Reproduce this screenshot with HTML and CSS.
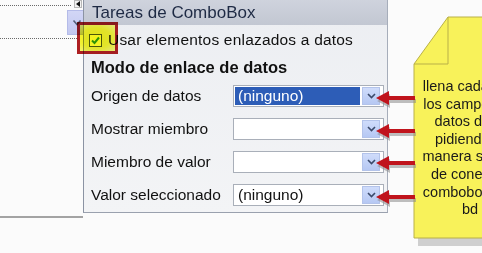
FILE: index.html
```html
<!DOCTYPE html>
<html lang="es">
<head>
<meta charset="utf-8">
<title>Tareas de ComboBox</title>
<link rel="stylesheet" href="styles.css">
</head>
<body>
<div class="stage">
  <div class="designer">
    <div class="drow top">
      <div class="dots"></div>
      <div class="tagarrow"><span class="tri"></span></div>
    </div>
    <div class="drow tagrow">
      <div class="tagbtn">
        <svg width="10" height="8" viewBox="0 0 10 8"><path d="M1.5 1.5 L5 5.5 L8.5 1.5" fill="none" stroke="#55607a" stroke-width="1.6"/></svg>
      </div>
    </div>
    <div class="dots mid"></div>
    <div class="dfill"></div>
    <div class="dline"></div>
  </div>

  <section class="panel">
    <header class="phead">Tareas de ComboBox</header>
    <div class="pbody">
      <label class="checkrow">
        <span class="checkbox">
          <svg width="11" height="11" viewBox="0 0 11 11"><path d="M2 5.5 L4.5 8 L9 2.5" fill="none" stroke="#2f9a22" stroke-width="2"/></svg>
        </span>
        <span class="checktext">Usar elementos enlazados a datos</span>
      </label>
      <h2 class="section">Modo de enlace de datos</h2>
      <div class="rows">
        <div class="row">
          <span class="label">Origen de datos</span>
          <div class="combo">
            <span class="value selected">(ninguno)</span>
            <span class="dd"><svg width="9" height="6" viewBox="0 0 9 6"><path d="M1 1 L4.5 4.5 L8 1" fill="none" stroke="#3b4a6b" stroke-width="1.6"/></svg></span>
          </div>
        </div>
        <div class="row">
          <span class="label">Mostrar miembro</span>
          <div class="combo">
            <span class="value"></span>
            <span class="dd"><svg width="9" height="6" viewBox="0 0 9 6"><path d="M1 1 L4.5 4.5 L8 1" fill="none" stroke="#3b4a6b" stroke-width="1.6"/></svg></span>
          </div>
        </div>
        <div class="row">
          <span class="label">Miembro de valor</span>
          <div class="combo">
            <span class="value"></span>
            <span class="dd"><svg width="9" height="6" viewBox="0 0 9 6"><path d="M1 1 L4.5 4.5 L8 1" fill="none" stroke="#3b4a6b" stroke-width="1.6"/></svg></span>
          </div>
        </div>
        <div class="row">
          <span class="label">Valor seleccionado</span>
          <div class="combo">
            <span class="value">(ninguno)</span>
            <span class="dd"><svg width="9" height="6" viewBox="0 0 9 6"><path d="M1 1 L4.5 4.5 L8 1" fill="none" stroke="#3b4a6b" stroke-width="1.6"/></svg></span>
          </div>
        </div>
      </div>
    </div>
  </section>

  <aside class="notearea">
    <div class="note">
      <svg class="noteshape" width="116" height="230" viewBox="0 0 116 230">
        <path d="M37 3 L115 3 L115 229 L3 229 L3 50 Z" fill="#9a9a9a" opacity="0.45" transform="translate(2,3)"/>
        <path d="M35 1 L115 1 L115 222 L1 222 L1 48 Z" fill="#f8f25a" stroke="#b9b048" stroke-width="1"/>
        <path d="M35 1 L35 48 L1 48" fill="none" stroke="#b9b048" stroke-width="1"/>
      </svg>
      <p class="notetext">llena cada uno<br>los campos de<br>datos de la<br>pidiendo la<br>manera simple<br>de conexión<br>combobox a la<br>bd</p>
    </div>
  </aside>

  <div class="highlight"></div>

  <svg class="arrows" width="60" height="130" viewBox="0 0 60 130">
    <g fill="#8c8c8c" opacity="0.55" transform="translate(1,3)">
      <path d="M6 13 L19 6 L19 11 L45 11 L45 15 L19 15 L19 20 Z"/>
      <path d="M6 46 L19 39 L19 44 L45 44 L45 48 L19 48 L19 53 Z"/>
      <path d="M6 78 L19 71 L19 76 L45 76 L45 80 L19 80 L19 85 Z"/>
      <path d="M6 112 L19 105 L19 110 L45 110 L45 114 L19 114 L19 119 Z"/>
    </g>
    <g fill="#c0141c">
      <path d="M6 13 L19 6 L19 11 L45 11 L45 15 L19 15 L19 20 Z"/>
      <path d="M6 46 L19 39 L19 44 L45 44 L45 48 L19 48 L19 53 Z"/>
      <path d="M6 78 L19 71 L19 76 L45 76 L45 80 L19 80 L19 85 Z"/>
      <path d="M6 112 L19 105 L19 110 L45 110 L45 114 L19 114 L19 119 Z"/>
    </g>
  </svg>
</div>
</body>
</html>
```

FILE: styles.css
```css
* { box-sizing: border-box; }
html, body { margin: 0; padding: 0; }
body {
  background: #fbfbfb;
  font-family: "Liberation Sans", Arial, sans-serif;
  overflow: hidden;
}
.stage {
  position: relative;
  width: 482px;
  height: 253px;
  display: flex;
  align-items: flex-start;
  overflow: hidden;
}

/* designer surface */
.designer {
  width: 83px;
  height: 253px;
  display: flex;
  flex-direction: column;
  flex: none;
}
.drow { display: flex; }
.drow.top { height: 10px; align-items: flex-start; }
.dots {
  flex: 1;
  margin-top: 5px;
  border-top: 1px dotted #6a6a6a;
}
.tagarrow {
  width: 8px;
  height: 8px;
  margin: 0 1px 0 3px;
  background: #f2f2f2;
  border: 1px solid #b8b8b8;
  display: flex;
  align-items: center;
  justify-content: center;
}
.tri {
  width: 0; height: 0;
  border-top: 3px solid transparent;
  border-bottom: 3px solid transparent;
  border-right: 4px solid #111;
}
.tagrow { height: 28px; justify-content: flex-end; }
.tagbtn {
  width: 16px;
  height: 25px;
  background: linear-gradient(#d2d6f6, #c2c8f0);
  border: 1px solid #b4bbe8;
  border-right: none;
  display: flex;
  align-items: center;
  justify-content: center;
  padding-left: 2px;
}
.dots.mid { flex: none; margin-top: 0; margin-right: 6px; }
.dfill { height: 177px; }
.dline { height: 2px; background: #a3a3a3; }

/* smart-tag panel */
.panel {
  width: 305px;
  height: 213px;
  flex: none;
  border-left: 1px solid #8b93a3;
  border-right: 1px solid #a6adba;
  border-bottom: 1px solid #9aa1ae;
  background: linear-gradient(#eceef2, #f3f4f6);
  display: flex;
  flex-direction: column;
}
.phead {
  height: 25px;
  line-height: 25px;
  padding-left: 8px;
  background: linear-gradient(#cfd3dd, #c2c7d2);
  color: #1e2a44;
  font-size: 17px;
}
.pbody {
  padding: 2px 0 0 7px;
  color: #111;
  font-size: 15.5px;
}
.checkrow {
  height: 26px;
  display: flex;
  align-items: center;
  gap: 6px;
  margin-left: -2px;
}
.checkbox {
  width: 13px;
  height: 13px;
  border: 1px solid #4e5a48;
  background: #fff;
  display: flex;
  align-items: center;
  justify-content: center;
  margin-top: 1px;
}
.checktext { letter-spacing: 0.2px; }
.section {
  margin: 1px 0 0;
  height: 26px;
  line-height: 26px;
  font-size: 16.5px;
  font-weight: bold;
}
.rows {
  margin-top: 5px;
  display: flex;
  flex-direction: column;
  gap: 11px;
}
.row {
  height: 22px;
  display: flex;
  align-items: center;
}
.label { width: 142px; flex: none; }
.combo {
  width: 151px;
  height: 22px;
  border: 1px solid #a9afb9;
  background: #fff;
  display: flex;
  align-items: center;
  padding: 1px;
}
.value {
  flex: 1;
  height: 18px;
  line-height: 18px;
  padding-left: 3px;
  margin-right: 2px;
}
.value.selected { background: #2d5db7; color: #fff; }
.dd {
  width: 18px;
  height: 18px;
  background: linear-gradient(#cfdcfb, #b6c8f3);
  border: 1px solid #b3c3ea;
  display: flex;
  align-items: center;
  justify-content: center;
  margin-right: 2px;
}

/* note */
.notearea { flex: 1; height: 253px; }
.note {
  position: relative;
  margin: 16px 0 0 25px;
  width: 116px;
  height: 230px;
}
.noteshape { position: absolute; left: 0; top: 0; }
.notetext {
  position: relative;
  margin: 0;
  padding-top: 62px;
  width: 114px;
  text-align: center;
  font-size: 14.5px;
  line-height: 17.6px;
  color: #1a1a1a;
}

/* overlays */
.highlight {
  position: absolute;
  left: 77px;
  top: 22px;
  width: 41px;
  height: 32px;
  border: 3px solid #b01f22;
  background: radial-gradient(ellipse at 45% 50%, #f2f21a 0%, #f4f42c 55%, #f7f780 100%);
  mix-blend-mode: multiply;
}
.arrows {
  position: absolute;
  left: 370px;
  top: 85px;
}
```
